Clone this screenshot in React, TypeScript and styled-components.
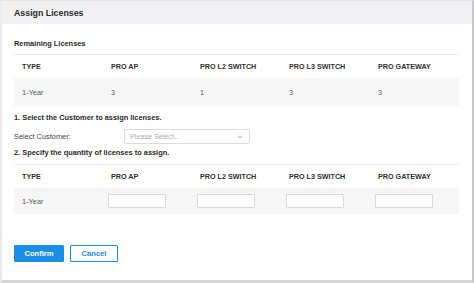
import styled, { createGlobalStyle } from "styled-components"

const GlobalStyle = createGlobalStyle`
  html, body {
    margin: 0;
    padding: 0;
    background: #ffffff;
  }
  body {
    font-family: "Liberation Sans", Arial, sans-serif;
    color: #333;
  }
`

const Modal = styled.div`
  box-sizing: border-box;
  width: 474px;
  height: 283px;
  border-top: 1px solid #e4e4e4;
  border-left: 2px solid #ececec;
  border-right: 2px solid #c8c8c8;
  border-bottom: 3px solid #d6d6d6;
  display: flex;
  flex-direction: column;
  background: #fff;
`

const Header = styled.div`
  height: 23px;
  background: #f1f1f3;
  display: flex;
  align-items: center;
  padding-left: 12px;
  font-size: 8.8px;
  font-weight: bold;
  color: #2b2b2b;
`

const Body = styled.div`
  padding: 0 13px 0 12px;
  display: flex;
  flex-direction: column;
`

const SectionTitle = styled.div<{ $top: number; $bottom?: number }>`
  margin-top: ${(p) => p.$top}px;
  margin-bottom: ${(p) => p.$bottom ?? 0}px;
  font-size: 7.4px;
  font-weight: bold;
  color: #2b2b2b;
  line-height: 10px;
`

const Table = styled.div`
  display: grid;
  grid-template-columns: repeat(5, 89px);
  border-top: 1px solid #ececec;
`

const HeadCell = styled.div`
  height: 23px;
  display: flex;
  align-items: center;
  padding-left: 8px;
  font-size: 7.2px;
  font-weight: bold;
  color: #2f2f2f;
`

const Cell = styled.div<{ $h: number }>`
  height: ${(p) => p.$h}px;
  display: flex;
  align-items: center;
  padding-left: 8px;
  background: #f6f6f7;
  font-size: 7.4px;
  color: #5a5a5a;
`

const InputCell = styled(Cell)`
  padding-left: 5px;
`

const QtyInput = styled.div`
  box-sizing: border-box;
  width: 58px;
  height: 14px;
  background: #fff;
  border: 1px solid #d9d9d9;
  border-radius: 1px;
`

const FormRow = styled.div`
  display: flex;
  align-items: center;
  margin-top: 6px;
  height: 15px;
`

const Label = styled.div`
  width: 110px;
  font-size: 7.4px;
  color: #444;
`

const Select = styled.div`
  box-sizing: border-box;
  width: 126px;
  height: 15px;
  border: 1px solid #dcdcdc;
  border-radius: 2px;
  display: flex;
  align-items: center;
  justify-content: space-between;
  padding: 0 6px 0 5px;
  font-size: 7.2px;
  color: #aaa;
`

const Buttons = styled.div`
  display: flex;
  gap: 6px;
  margin-top: 31px;
`

const Button = styled.div<{ $primary?: boolean }>`
  box-sizing: border-box;
  height: 17px;
  display: flex;
  align-items: center;
  justify-content: center;
  border-radius: 1px;
  font-size: 7.6px;
  font-weight: bold;
  border: 1px solid #1a8de6;
  background: ${(p) => (p.$primary ? "#1a8de6" : "#fff")};
  color: ${(p) => (p.$primary ? "#fff" : "#1a8de6")};
  width: ${(p) => (p.$primary ? "50px" : "48px")};
`

const columns = ["TYPE", "PRO AP", "PRO L2 SWITCH", "PRO L3 SWITCH", "PRO GATEWAY"]
const remaining = ["1-Year", "3", "1", "3", "3"]

export default function App() {
  return (
    <>
      <GlobalStyle />
      <Modal>
        <Header>Assign Licenses</Header>
        <Body>
          <SectionTitle $top={15} $bottom={5}>
            Remaining Licenses
          </SectionTitle>
          <Table>
            {columns.map((c) => (
              <HeadCell key={c}>{c}</HeadCell>
            ))}
            {remaining.map((v, i) => (
              <Cell key={i} $h={28}>
                {v}
              </Cell>
            ))}
          </Table>
          <SectionTitle $top={7}>1. Select the Customer to assign licenses.</SectionTitle>
          <FormRow>
            <Label>Select Customer:</Label>
            <Select>
              <span>Please Select...</span>
              <svg width="6" height="4" viewBox="0 0 6 4">
                <path d="M0.5 0.5 L3 3 L5.5 0.5" fill="none" stroke="#999" strokeWidth="0.8" />
              </svg>
            </Select>
          </FormRow>
          <SectionTitle $top={4} $bottom={6}>
            2. Specify the quantity of licenses to assign.
          </SectionTitle>
          <Table>
            {columns.map((c) => (
              <HeadCell key={c}>{c}</HeadCell>
            ))}
            <Cell $h={26}>1-Year</Cell>
            {[1, 2, 3, 4].map((i) => (
              <InputCell key={i} $h={26}>
                <QtyInput />
              </InputCell>
            ))}
          </Table>
          <Buttons>
            <Button $primary>Confirm</Button>
            <Button>Cancel</Button>
          </Buttons>
        </Body>
      </Modal>
    </>
  )
}
